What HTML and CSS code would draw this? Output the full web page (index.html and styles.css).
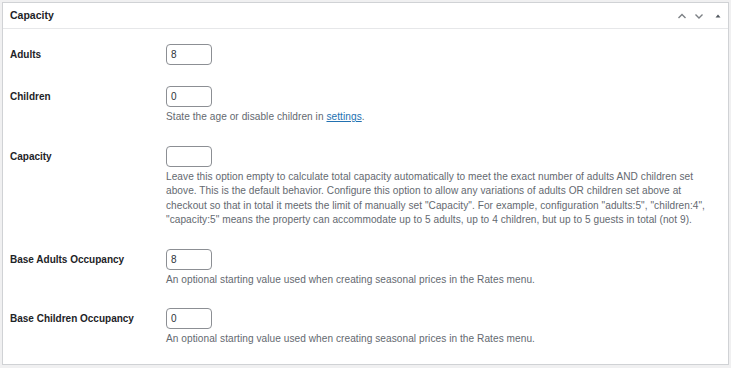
FILE: index.html
```html
<!DOCTYPE html>
<html>
<head>
<meta charset="utf-8">
<link rel="stylesheet" href="styles.css">
</head>
<body>
<div class="postbox">
  <div class="postbox-header">
    <h2 class="postbox-title">Capacity</h2>
    <div class="handle-actions">
      <svg class="icon-chevron" width="10" height="10" viewBox="0 0 10 10"><path d="M1.5 7 L5 3.5 L8.5 7" fill="none" stroke="#7c8085" stroke-width="1.4"/></svg>
      <svg class="icon-chevron" width="10" height="10" viewBox="0 0 10 10"><path d="M1.5 3.5 L5 7 L8.5 3.5" fill="none" stroke="#7c8085" stroke-width="1.4"/></svg>
      <svg class="icon-toggle" width="6" height="10" viewBox="0 0 6 10"><polygon points="0.5,6.5 3,3.5 5.5,6.5" fill="#50575e"/></svg>
    </div>
  </div>
  <div class="inside">
    <div class="form-row">
      <div class="form-label">Adults</div>
      <div class="form-field">
        <div class="text-input">8</div>
      </div>
    </div>
    <div class="form-row">
      <div class="form-label">Children</div>
      <div class="form-field">
        <div class="text-input">0</div>
        <p class="description">State the age or disable children in <a class="link" href="#">settings</a>.</p>
      </div>
    </div>
    <div class="form-row">
      <div class="form-label">Capacity</div>
      <div class="form-field">
        <div class="text-input"></div>
        <p class="description">Leave this option empty to calculate total capacity automatically to meet the exact number of adults AND children set above. This is the default behavior. Configure this option to allow any variations of adults OR children set above at checkout so that in total it meets the limit of manually set "Capacity". For example, configuration "adults:5", "children:4", "capacity:5" means the property can accommodate up to 5 adults, up to 4 children, but up to 5 guests in total (not 9).</p>
      </div>
    </div>
    <div class="form-row">
      <div class="form-label">Base Adults Occupancy</div>
      <div class="form-field">
        <div class="text-input">8</div>
        <p class="description">An optional starting value used when creating seasonal prices in the Rates menu.</p>
      </div>
    </div>
    <div class="form-row">
      <div class="form-label">Base Children Occupancy</div>
      <div class="form-field">
        <div class="text-input">0</div>
        <p class="description">An optional starting value used when creating seasonal prices in the Rates menu.</p>
      </div>
    </div>
  </div>
</div>
</body>
</html>
```
FILE: styles.css
```css
html, body {
  margin: 0;
  padding: 0;
  background: #f0f0f1;
  font-family: "Liberation Sans", Arial, sans-serif;
  color: #1d2327;
}
.postbox {
  margin: 2px 2px 0 2px;
  background: #ffffff;
  border: 1px solid #d0d2d5;
}
.postbox-header {
  display: flex;
  align-items: center;
  height: 25px;
  padding: 0 7px;
  border-bottom: 1px solid #e6e7e9;
}
.postbox-title {
  flex: 1;
  margin: 0;
  font-size: 10.5px;
  font-weight: bold;
  line-height: 25px;
  color: #1d2327;
}
.handle-actions {
  display: flex;
  align-items: center;
}
.icon-chevron {
  display: block;
  margin-right: 7px;
}
.icon-chevron + .icon-chevron {
  margin-right: 11px;
}
.icon-toggle {
  display: block;
}
.inside {
  padding: 4px 11px 7px 7px;
}
.form-row {
  display: flex;
  align-items: flex-start;
  padding: 11px 0 10px 0;
}
.form-label {
  width: 156px;
  flex: none;
  font-size: 10px;
  font-weight: bold;
  line-height: 21px;
  color: #1d2327;
}
.form-field {
  flex: 1;
  min-width: 0;
}
.text-input {
  box-sizing: border-box;
  width: 46px;
  height: 21px;
  border: 1px solid #8c8f94;
  border-radius: 4px;
  padding: 0 4px;
  font-size: 10px;
  line-height: 19px;
  color: #2c3338;
  background: #fff;
}
.description {
  margin: 3px 0 0 0;
  font-size: 10.1px;
  letter-spacing: 0.06px;
  line-height: 14.5px;
  color: #646970;
}
.description-wide {
  max-width: 548px;
}
.link {
  color: #2271b1;
  text-decoration: underline;
}
```
